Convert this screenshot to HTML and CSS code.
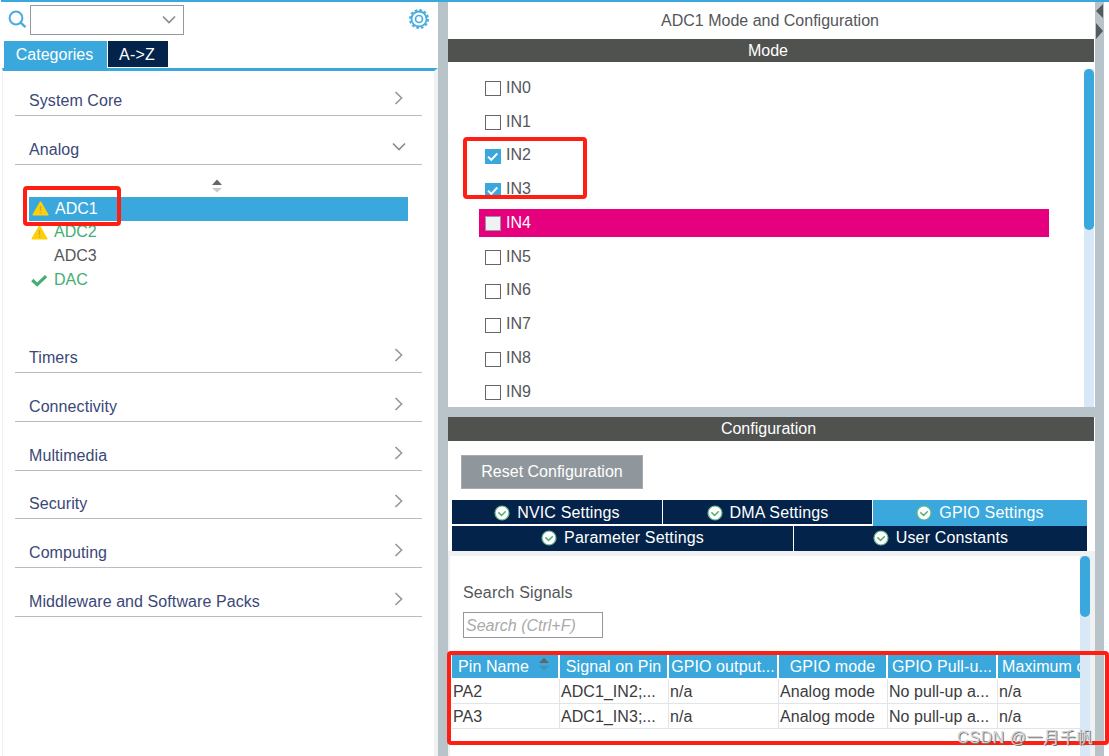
FILE: index.html
```html
<!DOCTYPE html>
<html lang="en">
<head>
<meta charset="utf-8">
<title>ADC1 Mode and Configuration</title>
<link rel="stylesheet" href="styles.css">
</head>
<body>
<svg class="defs" aria-hidden="true">
  <symbol id="right" viewBox="0 0 10 14"><path d="M1.5 1 7.6 7l-6.1 6" fill="none" stroke="#969696" stroke-width="1.6"/></symbol>
  <symbol id="down" viewBox="0 0 14 10"><path d="M1 1.5 7 7.6l6-6.1" fill="none" stroke="#8b8b8b" stroke-width="1.6"/></symbol>
  <symbol id="ok" viewBox="0 0 16 16"><circle cx="8" cy="8" r="7" fill="#fff" stroke="#62b886" stroke-width="1.2"/><path d="m4.4 7.4 3.2 3 4.2-4.2" fill="none" stroke="#58b17c" stroke-width="1.5"/></symbol>
  <symbol id="warn" viewBox="0 0 17 15"><path d="M8.5 1.2 15.8 13.8H1.2z" fill="#fdd109" stroke="#fdd109" stroke-width="1.6" stroke-linejoin="round"/><path d="M8.5 5v5m0 1.3v1.5" stroke="#d9a53a" stroke-width="1.5"/></symbol>
  <symbol id="sort" viewBox="0 0 12 14"><path d="M6 .5 11 6H1z" fill="#666"/><path d="M1 9h10l-5 4.5z" fill="#666" opacity=".35"/></symbol>
</svg>
<div class="app">
  <div class="topline"></div>
  <main class="main">
    <aside class="left">
      <div class="search">
        <svg class="glass" viewBox="0 0 20 20"><circle cx="8" cy="8" r="6.4" fill="none" stroke="#46ade0" stroke-width="2"/><path d="m12.6 12.6 4.9 4.6" stroke="#46ade0" stroke-width="2.4"/></svg>
        <div class="combo"><svg class="down"><use href="#down"/></svg></div>
        <svg class="gear" viewBox="0 0 22 22" fill="none" stroke="#46ade0"><circle cx="11" cy="11" r="9.1" stroke-width="1.8" stroke-dasharray="2.7 2.065"/><circle cx="11" cy="11" r="7.5" stroke-width="1.8"/><circle cx="11" cy="11" r="3.5" stroke-width="1.7"/></svg>
      </div>
      <nav class="tabs"><span class="tab on">Categories</span><span class="tab az">A-&gt;Z</span></nav>
      <div class="cats">
        <div class="cat first"><span>System Core</span><svg class="right"><use href="#right"/></svg></div>
        <div class="cat"><span>Analog</span><svg class="down"><use href="#down"/></svg></div>
        <div class="tree">
          <div class="treesort"><svg class="sort"><use href="#sort"/></svg></div>
          <div class="node sel"><svg class="warn"><use href="#warn"/></svg><span>ADC1</span></div>
          <div class="node green"><svg class="warn"><use href="#warn"/></svg><span>ADC2</span></div>
          <div class="node"><i class="blank"></i><span>ADC3</span></div>
          <div class="node green"><svg class="warn" viewBox="0 0 17 15"><path d="m1.3 7 4.8 4.6 9-8.5" fill="none" stroke="#43ae72" stroke-width="3.2"/></svg><span>DAC</span></div>
        </div>
        <div class="cat"><span>Timers</span><svg class="right"><use href="#right"/></svg></div>
        <div class="cat"><span>Connectivity</span><svg class="right"><use href="#right"/></svg></div>
        <div class="cat"><span>Multimedia</span><svg class="right"><use href="#right"/></svg></div>
        <div class="cat"><span>Security</span><svg class="right"><use href="#right"/></svg></div>
        <div class="cat"><span>Computing</span><svg class="right"><use href="#right"/></svg></div>
        <div class="cat"><span>Middleware and Software Packs</span><svg class="right"><use href="#right"/></svg></div>
      </div>
    </aside>
    <div class="split"></div>
    <section class="detail">
      <h1 class="title">ADC1 Mode and Configuration</h1>
      <h2 class="bar">Mode</h2>
      <div class="mode">
        <div class="inputs">
          <div class="in"><i class="box"></i>IN0</div>
          <div class="in"><i class="box"></i>IN1</div>
          <div class="in"><i class="box checked"><svg viewBox="0 0 15 15"><path d="m3 7.6 3.3 3.3 6-6.4"/></svg></i>IN2</div>
          <div class="in"><i class="box checked"><svg viewBox="0 0 15 15"><path d="m3 7.6 3.3 3.3 6-6.4"/></svg></i>IN3</div>
          <div class="in pink"><i class="box off"></i>IN4</div>
          <div class="in"><i class="box"></i>IN5</div>
          <div class="in"><i class="box"></i>IN6</div>
          <div class="in"><i class="box"></i>IN7</div>
          <div class="in"><i class="box"></i>IN8</div>
          <div class="in"><i class="box"></i>IN9</div>
        </div>
        <div class="scroll"><div class="thumb"></div></div>
      </div>
      <div class="hsplit"></div>
      <h2 class="bar conf">Configuration</h2>
      <div class="config">
        <button class="reset">Reset Configuration</button>
        <div class="ctabs">
          <div class="crow top"><div class="ct"><svg class="ok"><use href="#ok"/></svg>NVIC Settings</div><div class="ct"><svg class="ok"><use href="#ok"/></svg>DMA Settings</div><div class="ct active"><svg class="ok"><use href="#ok"/></svg>GPIO Settings</div></div>
          <div class="crow bottom"><div class="ct"><svg class="ok"><use href="#ok"/></svg>Parameter Settings</div><div class="ct"><svg class="ok"><use href="#ok"/></svg>User Constants</div></div>
        </div>
      </div>
      <div class="signals">
        <div class="content">
          <label class="lab">Search Signals</label>
          <div class="field">Search (Ctrl+F)</div>
          <div class="table">
            <div class="tr th"><span class="first">Pin Name<svg class="sort"><use href="#sort"/></svg></span><span>Signal on Pin</span><span>GPIO output...</span><span>GPIO mode</span><span>GPIO Pull-u...</span><span class="cut">Maximum o</span></div>
            <div class="tr"><span>PA2</span><span>ADC1_IN2;...</span><span>n/a</span><span>Analog mode</span><span>No pull-up a...</span><span>n/a</span></div>
            <div class="tr"><span>PA3</span><span>ADC1_IN3;...</span><span>n/a</span><span>Analog mode</span><span>No pull-up a...</span><span>n/a</span></div>
          </div>
        </div>
        <div class="scroll"><div class="thumb"></div></div>
      </div>
    </section>
    <div class="edge"><svg viewBox="0 0 9 40"><path d="M8 2v14L1 9zM1 21v16l7-8z" fill="#555a5d"/></svg></div>
  </main>
  <div class="mark mark-adc"></div>
  <div class="mark mark-in"></div>
  <div class="mark mark-table"></div>
  <div class="watermark">CSDN @一月千帆</div>
</div>
</body>
</html>
```
FILE: styles.css
```css
* { box-sizing: border-box; }
body { margin: 0; background: #fff; font: 16px/20px "Liberation Sans", "Noto Sans CJK SC", sans-serif; color: #55565a; }
.defs { position: absolute; width: 0; height: 0; }
.app { position: relative; width: 1109px; height: 756px; display: flex; flex-direction: column; overflow: hidden; }
.topline { height: 2px; flex: none; margin-left: 1px; background: #3aa8dc; }
.main { flex: 1; display: flex; min-height: 0; }
svg { display: block; flex: none; }
svg.right { width: 10px; height: 14px; }
svg.down { width: 14px; height: 10px; }
svg.sort { width: 12px; height: 14px; }

.left { width: 438px; display: flex; flex-direction: column; }
.search { height: 39px; display: flex; align-items: flex-start; padding: 3px 8px 0 8px; }
.glass { width: 20px; height: 20px; margin: 5px 2px 0 0; }
.combo { width: 154px; height: 30px; border: 1px solid #92989c; display: flex; align-items: center; justify-content: flex-end; padding-right: 7px; }
.gear { width: 22px; height: 22px; margin: 3px 0 0 auto; }
.tabs { height: 27px; display: flex; gap: 1px; padding-left: 4px; }
.tab { height: 26px; line-height: 27px; color: #fff; background: #03234b; width: 60px; text-align: center; padding-right: 2px; letter-spacing: .2px; }
.tab.on { width: 103px; height: 27px; background: #3aa8dc; letter-spacing: 0; }
.cats { flex: 1; margin-left: 2px; border-top: 3px solid #3aa8dc; border-left: 1px solid #eff1f3; border-right: 4px solid #eff1f3; padding: 0 12px; }
.cat { height: 48.75px; border-bottom: 1px solid #b3bdc3; color: #3b4777; display: flex; align-items: flex-end; justify-content: space-between; padding: 0 18px 4px 14px; letter-spacing: .08px; }
.cat.first { height: 45px; }
.cat .right { margin-bottom: 6px; }
.cat .down { margin: 0 -2px 8px 0; }
.tree { height: 159.5px; padding: 14px 14px 0 14px; }
.treesort { height: 18px; display: flex; justify-content: center; padding-right: 3px; }
.node { height: 23.8px; display: flex; align-items: center; padding-left: 2px; }
.node.green { color: #43ae72; }
.node.sel { background: #3aa8dc; color: #fff; padding-left: 3px; }
.warn, .blank { width: 17px; height: 15px; margin-right: 6px; }

.split { width: 10px; background: #b8c4ca; }
.detail { width: 647px; display: flex; flex-direction: column; }
.title { height: 37px; margin: 0; font-size: 16px; font-weight: normal; line-height: 37px; text-align: center; padding-right: 3px; }
.bar { height: 23px; margin: 0 1px 0 0; background: #50524f; color: #fff; font-size: 16px; font-weight: normal; line-height: 23px; text-align: center; padding-right: 6px; flex: none; }
.conf { height: 24px; padding-right: 5px; }
.mode { height: 345px; display: flex; justify-content: space-between; padding-right: 1px; }
.inputs { width: 602px; padding: 9px 0 0 31px; }
.in { height: 33.78px; display: flex; align-items: center; gap: 5px; padding-left: 6px; }
.in.pink { height: 27.78px; margin: 3px 1px 3px 0; background: #e6007e; color: #fff; }
.box { width: 16px; height: 15px; border: 1.5px solid #666; background: #fff; position: relative; top: 1px; }
.box.off { background: #eff1f4; border-color: #9098a0; }
.box.checked { background: #3aa8dc; border-color: #3aa8dc; }
.box svg { width: 15px; height: 15px; margin: -1px; fill: none; stroke: #fff; stroke-width: 2; }
.scroll { width: 10px; background: #d9e8f6; }
.thumb { background: #3aa8dc; border-radius: 5px; }
.mode .scroll { margin-top: 7px; }
.mode .thumb { height: 161px; }
.hsplit { height: 10px; background: #b8c4ca; }
.config { height: 110px; padding: 14px 8px 0 4px; }
.reset { display: block; width: 182px; height: 34px; margin: 0 0 11px 9px; padding: 0; border: 1px solid #a6adb2; background: #8f979d; color: #fff; font: 16px "Liberation Sans", sans-serif; }
.ctabs { color: #fff; letter-spacing: .16px; }
.crow { display: grid; }
.top { height: 26px; grid-template-columns: 210px 209px 214px; column-gap: 1px; }
.bottom { height: 25px; grid-template-columns: 341px 293px; column-gap: 1px; }
.ct { height: 24px; background: #03234b; display: flex; align-items: center; justify-content: center; gap: 7px; padding-top: 1px; }
.bottom .ct { height: 25px; padding: 0 0 1px; }
.ct.active { background: #3aa8dc; height: 26px; padding: 0 0 1px; }
.ok { width: 16px; height: 16px; }
.signals { flex: 1; display: flex; border-top: 5px solid #eff1f3; border-left: 2px solid #eff1f3; border-right: 5px solid #eff1f3; }
.content { width: 630px; overflow: hidden; }
.signals .thumb { height: 61px; }
.lab { display: block; margin: 27px 0 9px 13px; letter-spacing: .15px; }
.field { width: 140px; height: 26px; margin-left: 13px; border: 1px solid #92989c; padding-left: 2px; line-height: 25px; font-style: italic; color: #aaa; }
.table { width: 690px; margin-top: 16px; margin-left: 2px; color: #3b3b3d; }
.tr { height: 25px; display: grid; grid-template-columns: 108px 109px 110px 109px 110px 144px; line-height: 26px; letter-spacing: .05px; }
.tr span { border-right: 1px solid #e2e5e8; border-bottom: 1px solid #e2e5e8; padding-left: 1px; white-space: nowrap; overflow: hidden; }
.tr.th span { position: relative; height: 24px; background: #3aa8dc; color: #fff; line-height: 25px; letter-spacing: .1px; text-align: center; border-right: 2px solid #fff; border-bottom: 0; padding: 0; }
.tr.th .first { text-align: left; padding-left: 6px; }
.th .sort { position: absolute; right: 8px; top: 3px; }
.tr.th .cut { text-align: left; padding-left: 4px; }
.edge { width: 9px; background: #b8c4ca; }
.edge svg { width: 9px; height: 40px; }

.mark { position: absolute; border: 4px solid #ff1e12; border-radius: 4px; }
.mark-adc { left: 23px; top: 186px; width: 98px; height: 40px; }
.mark-in { left: 463px; top: 137px; width: 124px; height: 62px; }
.mark-table { left: 447px; top: 651px; width: 662px; height: 94px; }
.watermark { position: absolute; left: 957px; top: 728px; white-space: nowrap; font-size: 16px; letter-spacing: .6px; color: #d4d4d4; text-shadow: 1px 1px 0 #777; }
```
